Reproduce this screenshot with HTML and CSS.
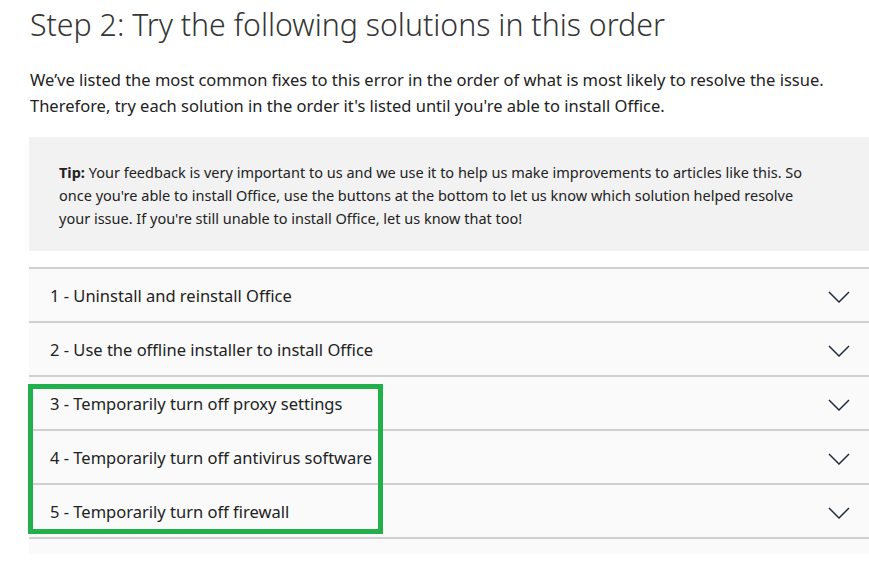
FILE: index.html
```html
<!DOCTYPE html>
<html>
<head>
    <title>Step 2 - Office install fixes</title>
    <link rel="stylesheet" href="styles.css">
</head>
<body>
    <div class="article">
        <h2 class="step-title">Step 2: Try the following solutions in this order</h2>
        <p class="intro">We’ve listed the most common fixes to this error in the order of what is most likely to resolve the issue. Therefore, try each solution in the order it's listed until you're able to install Office.</p>
        <div class="tip">
            <p><b>Tip:</b> Your feedback is very important to us and we use it to help us make improvements to articles like this. So once you're able to install Office, use the buttons at the bottom to let us know which solution helped resolve your issue. If you're still unable to install Office, let us know that too!</p>
        </div>
        <div class="accordion">
            <div class="row"><span>1 - Uninstall and reinstall Office</span><svg class="chevron" width="22" height="12" viewBox="0 0 22 12"><path d="M1 1 L11 11 L21 1"/></svg></div>
            <div class="row"><span>2 - Use the offline installer to install Office</span><svg class="chevron" width="22" height="12" viewBox="0 0 22 12"><path d="M1 1 L11 11 L21 1"/></svg></div>
            <div class="row"><span>3 - Temporarily turn off proxy settings</span><svg class="chevron" width="22" height="12" viewBox="0 0 22 12"><path d="M1 1 L11 11 L21 1"/></svg></div>
            <div class="row"><span>4 - Temporarily turn off antivirus software</span><svg class="chevron" width="22" height="12" viewBox="0 0 22 12"><path d="M1 1 L11 11 L21 1"/></svg></div>
            <div class="row"><span>5 - Temporarily turn off firewall</span><svg class="chevron" width="22" height="12" viewBox="0 0 22 12"><path d="M1 1 L11 11 L21 1"/></svg></div>
            <div class="highlight"></div>
        </div>
    </div>
</body>
</html>
```

FILE: styles.css
```css
body {
    margin: 0;
    font-family: "Noto Sans", "Open Sans", Arial, sans-serif;
    color: #222222;
    background-color: #ffffff;
    overflow: hidden;
}
.article {
    padding-left: 29px;
}
.step-title {
    margin: 0;
    padding-top: 3px;
    padding-left: 1px;
    font-weight: 300;
    font-size: 30.3px;
    line-height: 44px;
    color: #363636;
}
.intro {
    margin: 20px 0 0 0;
    padding-left: 1px;
    font-size: 16.5px;
    line-height: 26px;
    width: 830px;
}
.tip {
    margin-top: 18px;
    background-color: #f2f2f2;
    padding: 24px 30px 21px 30px;
}
.tip p {
    margin: 0;
    font-size: 14.5px;
    line-height: 23px;
    width: 760px;
}
.tip b {
    font-weight: 700;
}
.accordion {
    position: relative;
    margin-top: 16px;
    background-color: #fafafa;
    border-top: 2px solid #d0d0d0;
    padding-bottom: 15px;
}
.row {
    display: flex;
    justify-content: space-between;
    align-items: center;
    height: 52px;
    padding: 0 19px 0 21px;
    border-bottom: 2px solid #d0d0d0;
    font-size: 16.5px;
}
.chevron {
    margin-top: 3px;
    fill: none;
    stroke: #1f2d3d;
    stroke-width: 1.5;
}
/* annotation box drawn over rows 3 to 5 */
.highlight {
    position: absolute;
    left: -1px;
    top: 115px;
    width: 345px;
    height: 140px;
    border: 5px solid #21b04b;
}
```
